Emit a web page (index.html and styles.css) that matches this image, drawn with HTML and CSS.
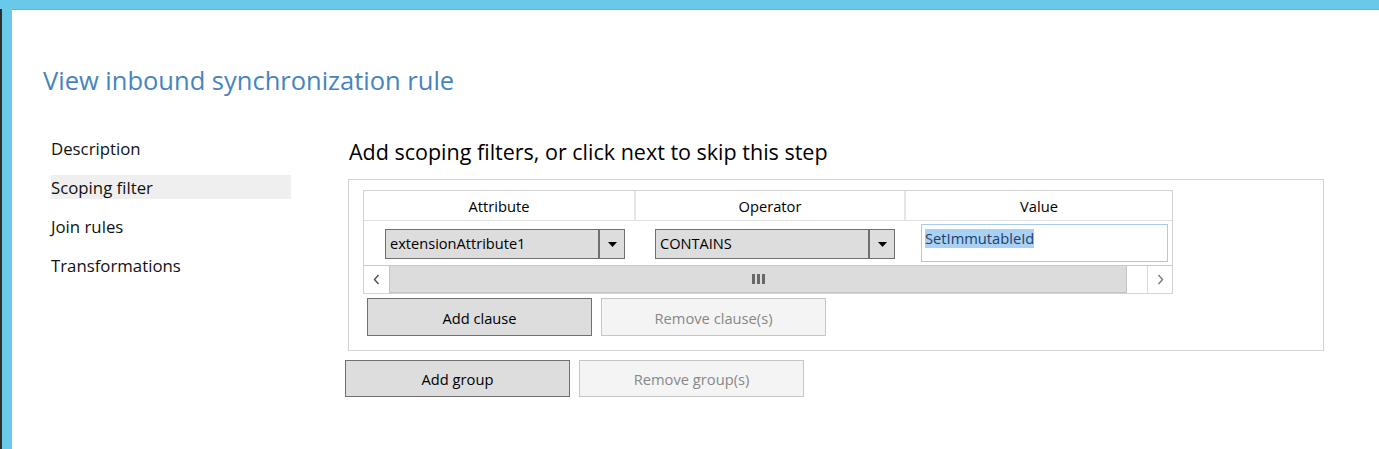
FILE: index.html
```html
<!DOCTYPE html>
<html lang="en">
<head>
<meta charset="utf-8">
<title>View inbound synchronization rule</title>
<link rel="stylesheet" href="styles.css">
</head>
<body>
<div class="window">
  <div class="titlebar"></div>
  <div class="frame">
    <div class="edge"></div>
    <div class="side"></div>
    <div class="content">
      <h1 class="title">View inbound synchronization rule</h1>
      <div class="main">
        <ul class="nav">
          <li class="nav-item">Description</li>
          <li class="nav-item active">Scoping filter</li>
          <li class="nav-item">Join rules</li>
          <li class="nav-item">Transformations</li>
        </ul>
        <section class="pane">
          <h2 class="heading">Add scoping filters, or click next to skip this step</h2>
          <div class="panel">
            <div class="grid">
              <div class="grid-head">
                <div class="head-cell">Attribute</div>
                <div class="head-cell">Operator</div>
                <div class="head-cell last">Value</div>
              </div>
              <div class="grid-row">
                <div class="cell cell-attr">
                  <div class="combo">
                    <span class="combo-text">extensionAttribute1</span>
                    <span class="combo-btn"><svg width="9" height="5" viewBox="0 0 9 5"><polygon points="0,0 9,0 4.5,5" fill="#000"/></svg></span>
                  </div>
                </div>
                <div class="cell cell-op">
                  <div class="combo">
                    <span class="combo-text">CONTAINS</span>
                    <span class="combo-btn"><svg width="9" height="5" viewBox="0 0 9 5"><polygon points="0,0 9,0 4.5,5" fill="#000"/></svg></span>
                  </div>
                </div>
                <div class="cell cell-val">
                  <div class="textbox"><span class="selected">SetImmutableId</span></div>
                </div>
              </div>
              <div class="hscroll">
                <span class="arrow-btn left"><svg width="7" height="11" viewBox="0 0 7 11"><polyline points="5.5,1 1.5,5.5 5.5,10" fill="none" stroke="#505050" stroke-width="1.4"/></svg></span>
                <span class="thumb"><span class="grip"><i></i><i></i><i></i></span></span>
                <span class="arrow-btn right"><svg width="7" height="11" viewBox="0 0 7 11"><polyline points="1.5,1 5.5,5.5 1.5,10" fill="none" stroke="#7a7a7a" stroke-width="1.4"/></svg></span>
              </div>
            </div>
            <div class="btn-row inner">
              <button class="btn">Add clause</button>
              <button class="btn disabled">Remove clause(s)</button>
            </div>
          </div>
          <div class="btn-row outer">
            <button class="btn short">Add group</button>
            <button class="btn short disabled">Remove group(s)</button>
          </div>
        </section>
      </div>
    </div>
  </div>
</div>
</body>
</html>
```
FILE: styles.css
```css
* { box-sizing: border-box; }
html, body {
  margin: 0;
  padding: 0;
  width: 1379px;
  height: 449px;
  overflow: hidden;
  background: #ffffff;
  font-family: "Open Sans", "Noto Sans", sans-serif;
  color: #000;
}
.window {
  width: 1379px;
  height: 449px;
  display: flex;
  flex-direction: column;
}
.titlebar {
  height: 9px;
  background: #69c9eb;
  flex: none;
}
.frame {
  flex: 1;
  display: flex;
}
.edge {
  width: 2px;
  background: #2e2e2e;
  flex: none;
}
.side {
  width: 10px;
  background: #69c9eb;
  flex: none;
}
.content {
  flex: 1;
  background: #fff;
  border-top: 1px solid #8fa6b3;
  padding-left: 31px;
}
.title {
  margin: 54px 0 0 0;
  font-size: 25.5px;
  line-height: 32px;
  font-weight: 400;
  color: #4684bf;
}
.main {
  display: flex;
  align-items: flex-start;
  margin-top: 40px;
}
.nav {
  list-style: none;
  margin: 0 0 0 8px;
  padding: 0;
  width: 240px;
  display: flex;
  flex-direction: column;
  gap: 15px;
}
.nav-item {
  height: 24px;
  line-height: 25px;
  font-size: 16.8px;
  color: #111;
}
.nav-item.active {
  background: #efefef;
}
.pane {
  margin-left: 54px;
  padding-top: 2px;
}
.heading {
  margin: 0 0 13px 4px;
  font-size: 21.5px;
  line-height: 28px;
  font-weight: 400;
  color: #000;
}
.panel {
  margin-left: 3px;
  width: 976px;
  border: 1px solid #d3d3d3;
  padding: 10px 0 14px 14px;
}
.grid {
  width: 810px;
  border: 1px solid #d3d3d3;
}
.grid-head {
  display: grid;
  grid-template-columns: 272px 270px 266px;
  height: 30px;
}
.head-cell {
  border-right: 2px solid #e6e6e6;
  border-bottom: 1px solid #e0e0e0;
  text-align: center;
  font-size: 14.7px;
  line-height: 27px;
  padding-top: 2px;
}
.head-cell.last {
  border-right: none;
}
.grid-row {
  display: grid;
  grid-template-columns: 272px 270px 266px;
  height: 44px;
}
.cell {
  display: flex;
  align-items: flex-start;
}
.cell-attr { padding: 8px 0 0 21px; }
.cell-op { padding: 8px 0 0 19px; }
.cell-val { padding: 3px 0 0 15px; }
.combo {
  width: 240px;
  height: 30px;
  border: 1px solid #6f6f6f;
  background: #dddddd;
  display: flex;
}
.combo-text {
  flex: 1;
  padding-left: 4px;
  font-size: 14.6px;
  line-height: 26px;
  color: #000;
  white-space: nowrap;
}
.combo-btn {
  width: 26px;
  border-left: 2px solid #6f6f6f;
  display: flex;
  align-items: center;
  justify-content: center;
}
.textbox {
  width: 247px;
  height: 38px;
  border: 1px solid #a7cbec;
  background: #fff;
  padding: 2px 0 0 3px;
}
.selected {
  display: inline-block;
  font-size: 14.7px;
  line-height: 19px;
  background: #a8d1f5;
  color: #1f3f66;
}
.hscroll {
  display: flex;
  height: 28px;
  border-top: 1px solid #c9c9c9;
}
.arrow-btn {
  width: 25px;
  display: flex;
  align-items: center;
  justify-content: center;
  background: #fff;
  flex: none;
}
.arrow-btn.right {
  border-left: 1px solid #d9d9d9;
}
.thumb {
  flex: 1;
  margin-right: 20px;
  background: #dcdcdc;
  border: 1px solid #c4c4c4;
  border-top: none;
  display: flex;
  align-items: center;
  justify-content: center;
}
.grip {
  display: flex;
  gap: 2px;
}
.grip i {
  display: block;
  width: 3px;
  height: 10px;
  background: #686868;
}
.btn-row {
  display: flex;
  gap: 9px;
}
.btn-row.inner {
  margin: 4px 0 0 4px;
}
.btn-row.outer {
  margin-top: 9px;
}
.btn {
  width: 225px;
  height: 38px;
  border: 1px solid #707070;
  background: #dddddd;
  font-family: "Open Sans", "Noto Sans", sans-serif;
  font-size: 14.7px;
  line-height: 34px;
  padding: 1px 0 0 0;
  color: #000;
  margin: 0;
}
.btn.short {
  height: 37px;
}
.btn.disabled {
  background: #f4f4f4;
  border-color: #c6c6c6;
  color: #878787;
}
```
